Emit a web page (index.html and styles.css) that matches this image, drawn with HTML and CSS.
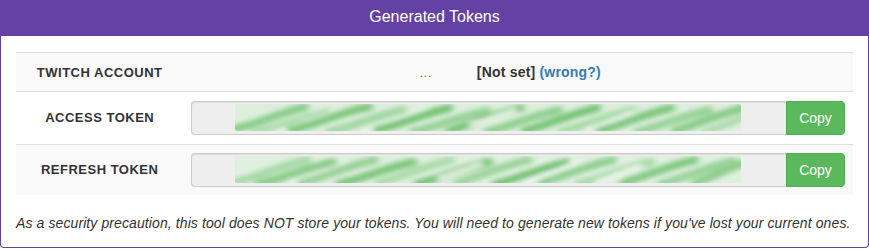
FILE: index.html
```html
<!DOCTYPE html>
<html>
<head>
<meta charset="utf-8">
<link rel="stylesheet" href="styles.css">
</head>
<body>
<div class="panel">
  <div class="panel-heading">Generated Tokens</div>
  <div class="panel-body">
    <table class="tokens">
      <tr class="odd first">
        <th class="label">Twitch Account</th>
        <td class="account">
          <span class="dots">...</span><span class="notset">[Not set]</span> <a class="wrong" href="#">(wrong?)</a>
        </td>
      </tr>
      <tr class="second">
        <th class="label">Access Token</th>
        <td>
          <div class="input-group">
            <div class="field">
              <svg class="blur" width="506" height="27" viewBox="0 0 506 27">
                <defs>
                  <filter id="b1" x="-5%" y="-40%" width="110%" height="180%"><feGaussianBlur stdDeviation="3.2 2"/></filter>
                  <clipPath id="c1"><rect x="0" y="0" width="506" height="27" rx="2"/></clipPath>
                </defs>
                <g clip-path="url(#c1)">
                  <rect x="0" y="0" width="506" height="27" fill="#dcefdc"/>
                  <g filter="url(#b1)" fill="none" stroke-linecap="round">
                    <path d="M-6 26 C20 22 40 10 70 3" stroke="#8ccd8c" stroke-width="8"/>
                    <path d="M20 28 C46 22 66 14 92 8" stroke="#acdcac" stroke-width="7"/>
                    <path d="M44 27 C70 20 90 10 118 4" stroke="#eef6ee" stroke-width="4"/>
                    <path d="M56 26 C84 20 104 8 134 3" stroke="#80c980" stroke-width="8"/>
                    <path d="M94 28 C120 22 140 12 168 6" stroke="#a4d8a4" stroke-width="8"/>
                    <path d="M128 27 C150 22 168 12 190 6" stroke="#f0f7f0" stroke-width="4"/>
                    <path d="M142 26 C166 20 188 10 214 4" stroke="#78c578" stroke-width="8"/>
                    <path d="M178 28 C204 22 226 12 252 7" stroke="#98d298" stroke-width="8"/>
                    <path d="M214 27 C238 20 258 10 286 4" stroke="#74c274" stroke-width="7"/>
                    <path d="M236 20 C254 16 266 10 280 6" stroke="#eef6ee" stroke-width="4"/>
                    <path d="M252 28 C276 22 296 12 324 6" stroke="#92d092" stroke-width="8"/>
                    <path d="M290 27 C314 20 336 10 362 4" stroke="#7ac57a" stroke-width="8"/>
                    <path d="M326 28 C350 22 372 12 398 6" stroke="#a8daa8" stroke-width="8"/>
                    <path d="M350 26 C368 22 382 14 398 8" stroke="#f0f7f0" stroke-width="4"/>
                    <path d="M364 27 C388 20 410 10 436 4" stroke="#80c880" stroke-width="8"/>
                    <path d="M402 28 C426 22 448 12 474 6" stroke="#9ad39a" stroke-width="8"/>
                    <path d="M440 27 C462 20 484 10 512 3" stroke="#8acc8a" stroke-width="8"/>
                    <path d="M470 28 C490 22 500 16 512 12" stroke="#acdcac" stroke-width="7"/>
                  </g>
                </g>
              </svg>
            </div>
            <button class="btn-copy">Copy</button>
          </div>
        </td>
      </tr>
      <tr class="odd">
        <th class="label">Refresh Token</th>
        <td>
          <div class="input-group">
            <div class="field">
              <svg class="blur" width="506" height="27" viewBox="0 0 506 27">
                <defs>
                  <filter id="b2" x="-5%" y="-40%" width="110%" height="180%"><feGaussianBlur stdDeviation="3.2 2"/></filter>
                  <clipPath id="c2"><rect x="0" y="0" width="506" height="27" rx="2"/></clipPath>
                </defs>
                <g clip-path="url(#c2)">
                  <rect x="0" y="0" width="506" height="27" fill="#dff0df"/>
                  <g filter="url(#b2)" fill="none" stroke-linecap="round">
                    <path d="M-4 27 C22 22 42 10 72 4" stroke="#a8daa8" stroke-width="8"/>
                    <path d="M24 28 C50 22 70 12 98 6" stroke="#8ccd8c" stroke-width="8"/>
                    <path d="M56 26 C78 22 94 14 112 8" stroke="#f0f7f0" stroke-width="4"/>
                    <path d="M66 27 C92 20 112 10 140 4" stroke="#98d298" stroke-width="8"/>
                    <path d="M104 28 C130 22 150 12 178 6" stroke="#80c880" stroke-width="8"/>
                    <path d="M144 27 C168 20 190 10 216 4" stroke="#acdcac" stroke-width="8"/>
                    <path d="M182 28 C206 22 228 12 254 6" stroke="#7ac57a" stroke-width="8"/>
                    <path d="M204 22 C220 18 232 12 246 8" stroke="#eef6ee" stroke-width="4"/>
                    <path d="M222 27 C246 20 266 10 294 4" stroke="#9ed49e" stroke-width="8"/>
                    <path d="M260 28 C284 22 306 12 332 6" stroke="#74c274" stroke-width="7"/>
                    <path d="M292 26 C312 20 326 12 342 6" stroke="#f2f8f2" stroke-width="4"/>
                    <path d="M306 27 C330 20 350 10 378 4" stroke="#92d092" stroke-width="8"/>
                    <path d="M344 28 C368 22 390 12 416 6" stroke="#a8daa8" stroke-width="8"/>
                    <path d="M362 26 C380 20 392 14 406 10" stroke="#f2f8f2" stroke-width="4"/>
                    <path d="M388 27 C412 20 432 10 460 4" stroke="#84ca84" stroke-width="8"/>
                    <path d="M426 28 C450 22 470 12 498 5" stroke="#9ad39a" stroke-width="8"/>
                    <path d="M460 27 C480 20 494 12 512 6" stroke="#8ecd8e" stroke-width="8"/>
                  </g>
                </g>
              </svg>
            </div>
            <button class="btn-copy">Copy</button>
          </div>
        </td>
      </tr>
    </table>
    <p class="note">As a security precaution, this tool does NOT store your tokens. You will need to generate new tokens if you've lost your current ones.</p>
  </div>
</div>
</body>
</html>
```
FILE: styles.css
```css
html, body {
  margin: 0;
  padding: 0;
  background: #fff;
}
body {
  font-family: "Liberation Sans", Arial, Helvetica, sans-serif;
  font-size: 14px;
  line-height: 20px;
  color: #333;
}
.panel {
  width: 867px;
  border: 1px solid #6441a5;
  border-top: none;
  border-radius: 0 0 4px 4px;
}
.panel-heading {
  background: #6441a5;
  color: #fff;
  font-size: 16px;
  height: 36px;
  line-height: 34px;
  text-align: center;
}
.panel-body {
  padding: 16px 15px 14px 15px;
}
.tokens {
  width: 100%;
  border-collapse: collapse;
  border-spacing: 0;
  margin-bottom: 18px;
}
.tokens th, .tokens td {
  padding: 8px;
  border-top: 1px solid #ddd;
  vertical-align: middle;
}
.tokens tr.first th, .tokens tr.first td {
  padding-top: 9px;
}
.tokens tr.second td .input-group {
  height: 35px;
  padding-top: 1px;
}
.tokens tr.odd th, .tokens tr.odd td {
  background: #f9f9f9;
}
.label {
  width: 20%;
  text-align: center;
  font-size: 13px;
  font-weight: bold;
  text-transform: uppercase;
  letter-spacing: 0.5px;
  color: #333;
}
.account {
  text-align: center;
  font-weight: bold;
  letter-spacing: 0.2px;
  padding-right: 24px !important;
}
.dots {
  font-size: 13px;
  font-weight: normal;
  color: #9a6e48;
  margin-right: 45px;
  letter-spacing: 0.5px;
}
.wrong {
  color: #337ab7;
  text-decoration: none;
}
.input-group {
  display: flex;
  height: 34px;
}
.field {
  flex: 1;
  box-sizing: border-box;
  height: 34px;
  background: #eee;
  border: 1px solid #ccc;
  border-right: none;
  border-radius: 4px 0 0 4px;
  padding: 2px 0 0 43px;
  box-shadow: inset 0 1px 1px rgba(0,0,0,0.075);
}
.blur {
  display: block;
}
.btn-copy {
  box-sizing: border-box;
  height: 34px;
  width: 59px;
  padding: 6px 12px;
  border: 1px solid #4cae4c;
  border-radius: 0 4px 4px 0;
  background: #5cb85c;
  color: #fff;
  font-family: "Liberation Sans", Arial, Helvetica, sans-serif;
  font-size: 14px;
  line-height: 20px;
}
.note {
  margin: 0;
  font-style: italic;
  letter-spacing: 0.1px;
  white-space: nowrap;
}
```
